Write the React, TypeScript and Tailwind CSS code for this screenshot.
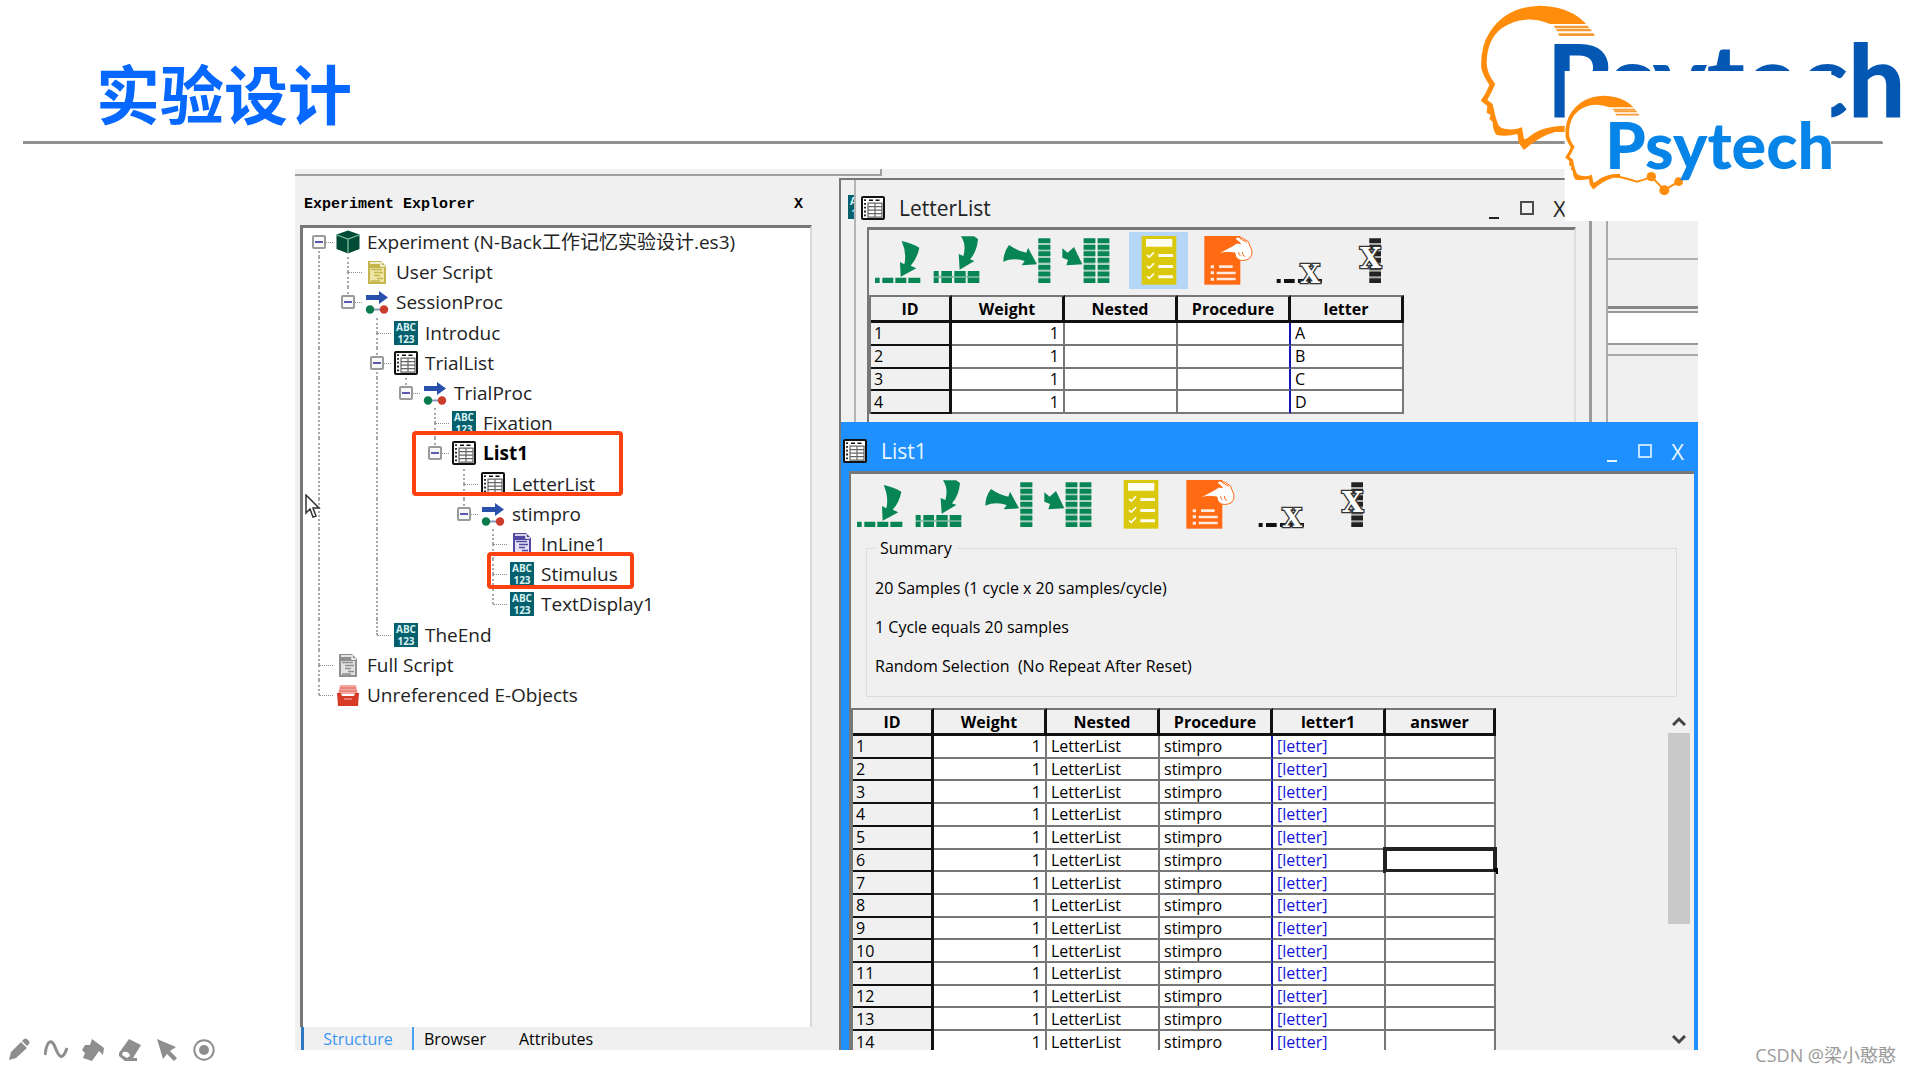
import type { ReactNode } from "react"

type IconName = "cube" | "userScript" | "proc" | "abc" | "list" | "inline" | "fullScript" | "box"

type TreeItem = {
  label: string
  icon: IconName
  depth: number
  open?: boolean
  bold?: boolean
}

const tree: TreeItem[] = [
  { label: "Experiment (N-Back工作记忆实验设计.es3)", icon: "cube", depth: 0, open: true },
  { label: "User Script", icon: "userScript", depth: 1 },
  { label: "SessionProc", icon: "proc", depth: 1, open: true },
  { label: "Introduc", icon: "abc", depth: 2 },
  { label: "TrialList", icon: "list", depth: 2, open: true },
  { label: "TrialProc", icon: "proc", depth: 3, open: true },
  { label: "Fixation", icon: "abc", depth: 4 },
  { label: "List1", icon: "list", depth: 4, open: true, bold: true },
  { label: "LetterList", icon: "list", depth: 5 },
  { label: "stimpro", icon: "proc", depth: 5, open: true },
  { label: "InLine1", icon: "inline", depth: 6 },
  { label: "Stimulus", icon: "abc", depth: 6 },
  { label: "TextDisplay1", icon: "abc", depth: 6 },
  { label: "TheEnd", icon: "abc", depth: 2 },
  { label: "Full Script", icon: "fullScript", depth: 0 },
  { label: "Unreferenced E-Objects", icon: "box", depth: 0 },
]

// true when another item of this depth follows before the branch closes
function continues(index: number, depth: number) {
  for (let i = index + 1; i < tree.length; i++) {
    if (tree[i].depth < depth) return false
    if (tree[i].depth === depth) return true
  }
  return false
}

function ListIcon() {
  return (
    <svg viewBox="0 0 24 24" className="h-6 w-6 shrink-0" aria-hidden="true">
      <rect x="1" y="1" width="22" height="22" rx="1" fill="#fff" stroke="#111" strokeWidth="2" />
      <path d="M8 4.2h4M14.5 4.2h4" stroke="#111" strokeWidth="1.6" />
      <path d="M4 3.2v18" stroke="#111" strokeWidth="1.8" strokeDasharray="1.8 2" />
      <path d="M7 7.2h14v14H7zM7 10.7h14M7 14.2h14M7 17.7h14M14 7.2v14" fill="none" stroke="#666" strokeWidth="1.2" />
    </svg>
  )
}

function AbcIcon() {
  return (
    <svg viewBox="0 0 24 24" className="h-6 w-6 shrink-0" aria-hidden="true">
      <rect width="24" height="24" fill="#05606e" />
      <g fill="#d9f2f2" fontFamily="'Open Sans', sans-serif" fontWeight="700" fontSize="10" textAnchor="middle">
        <text x="12" y="10.4">ABC</text>
        <text x="12" y="21.6">123</text>
      </g>
    </svg>
  )
}

function ScriptIcon({ line, fill }: { line: string; fill: string }) {
  return (
    <svg viewBox="0 0 24 24" className="h-6 w-6 shrink-0" aria-hidden="true">
      <path d="M3 1h13l5 5v18H3z" fill={line} />
      <path d="M5 3h10M16 2v4h4" stroke="#fff" strokeWidth="1.4" fill="none" />
      <rect x="5" y="8" width="14" height="14" fill={fill} />
      <path d="M6 9.5h11M9 12.5h9M9 15.5h6M12 18.5h6M6 21h9" stroke={line} strokeWidth="1.6" />
    </svg>
  )
}

function TreeIcon({ name }: { name: IconName }) {
  if (name === "list") return <ListIcon />
  if (name === "abc") return <AbcIcon />
  if (name === "userScript") return <ScriptIcon line="#c4b64c" fill="#eee6a6" />
  if (name === "inline") return <ScriptIcon line="#5248a0" fill="#e4e2f4" />
  if (name === "fullScript") return <ScriptIcon line="#8f8f8f" fill="#e2e2e2" />
  if (name === "proc")
    return (
      <svg viewBox="0 0 24 24" className="h-6 w-6 shrink-0" aria-hidden="true">
        <path d="M1 5h13V1l9 6.5-9 6.5v-4H1z" fill="#2a50ae" />
        <path d="M5 19.5h14" stroke="#8a9ab8" strokeWidth="2" />
        <circle cx="5" cy="19.5" r="4.2" fill="#0b7a4c" />
        <circle cx="19" cy="19.5" r="4.2" fill="#cc3c2c" />
      </svg>
    )
  if (name === "box")
    return (
      <svg viewBox="0 0 24 24" className="h-6 w-6 shrink-0" aria-hidden="true">
        <path d="M4 2h16l2 9H2z" fill="#f3a79e" />
        <path d="M4 5h16M3 8h18" stroke="#e26a5c" strokeWidth="1.2" />
        <path d="M1 10h4l1 3h12l1-3h4l-1 13H2z" fill="#d83a28" />
        <path d="M8 16h8" stroke="#f09488" strokeWidth="1.4" />
      </svg>
    )
  return (
    <svg viewBox="0 0 24 24" className="h-6 w-6 shrink-0" aria-hidden="true">
      <path d="M12 0.5 23.5 4.5v14.5L12 23.5 0.5 19V4.5z" fill="#004b35" />
      <path d="M1 5l11 4 11-4M12 9v14" stroke="#7fc0a4" strokeWidth="1.3" fill="none" />
    </svg>
  )
}

function TreeRow({ item, index }: { item: TreeItem; index: number }) {
  return (
    <li className="flex items-center whitespace-nowrap">
      {Array.from({ length: item.depth }, (_, d) => (
        <span key={d} className="flex h-full w-[29px] justify-center">
          {continues(index, d) && <span className="h-full border-l-2 border-dotted border-[#a8a8a8]" />}
        </span>
      ))}
      <span className="relative h-full w-[29px]">
        {index > 0 && <span className="absolute top-0 left-[14px] h-1/2 border-l-2 border-dotted border-[#a8a8a8]" />}
        {continues(index, item.depth) && (
          <span className="absolute bottom-0 left-[14px] h-1/2 border-l-2 border-dotted border-[#a8a8a8]" />
        )}
        <span className="absolute top-1/2 right-0 left-[15px] border-t border-dotted border-[#909090]" />
        {item.open && (
          <button
            aria-label={`Collapse ${item.label}`}
            className="absolute inset-0 m-auto flex h-[14px] w-[14px] items-center justify-center rounded-xs border-2 border-[#9a9a9a] bg-[#f8f8f8]"
          >
            <span className="h-[2px] w-[8px] bg-[#5a5ab0]" />
          </button>
        )}
      </span>
      <span className="flex w-[29px] justify-center">
        <TreeIcon name={item.icon} />
      </span>
      <span className={item.bold ? "pl-[5px] font-bold text-black" : "pl-[5px] text-[#222]"}>{item.label}</span>
    </li>
  )
}

const bars = [40, 60, 79, 99, 120, 140, 160]

function ToolButton({
  label,
  viewBox,
  active,
  children,
}: {
  label: string
  viewBox: string
  active?: boolean
  children: ReactNode
}) {
  return (
    <button aria-label={label} className={active ? "bg-[#b5d6f7]" : ""}>
      <svg viewBox={viewBox} className="h-[57px] w-[59px]" aria-hidden="true">
        {children}
      </svg>
    </button>
  )
}

function CrossMark({ x, y, size }: { x: number; y: number; size: number }) {
  return (
    <text
      x={x}
      y={y}
      fontFamily="'DejaVu Serif', serif"
      fontWeight="700"
      fontSize={size}
      textAnchor="middle"
      fill="#fff"
      stroke="#333"
      strokeWidth="8"
      style={{ paintOrder: "stroke" }}
    >
      X
    </text>
  )
}

function Toolbar({ active }: { active?: boolean }) {
  return (
    <div className="flex gap-3 pt-[2px]">
      <div className="flex">
        <ToolButton label="Add level" viewBox="12 21 177 171">
          <g fill="#078555">
            <path d="M110 48Q140 54 163 68Q157 100 137 122L154 130L107 155L105 111L118 118Q126 85 110 48z" />
            <path d="M30 158h14v16H30zM52 158h33v16H52zM91 158h33v16H91zM130 158h36v16h-36z" />
          </g>
        </ToolButton>
        <ToolButton label="Add multiple levels" viewBox="189 21 177 171">
          <g fill="#078555">
            <path d="M288 34L327 34L339 42Q336 80 315 103L328 108L284 134L281 87L295 93Q305 60 288 34z" />
            {[138, 158].map((y) => (
              <g key={y}>
                <rect x="206" y={y} width="15" height="16" />
                <rect x="229" y={y} width="32" height="16" />
                <rect x="268" y={y} width="34" height="16" />
                <rect x="308" y={y} width="35" height="16" />
              </g>
            ))}
            <path d="M206 152h137v7H206z" opacity="0.4" />
          </g>
        </ToolButton>
      </div>
      <div className="flex">
        <ToolButton label="Add attribute" viewBox="402 21 177 171">
          <g fill="#078555">
            <path d="M432 60Q458 78 484 83L489 68L516 118L470 121L479 108Q445 97 415 110Q415 82 432 60z" />
            <path d="M520 40h36v133h-36z" opacity="0.3" />
            {bars.map((y) => (
              <rect key={y} x="520" y={y} width="36" height="14" />
            ))}
          </g>
        </ToolButton>
        <ToolButton label="Add multiple attributes" viewBox="579 21 177 171">
          <g fill="#078555">
            <path d="M592 70L608 83L627 66L652 118L604 121L609 105L592 98z" />
            <path d="M656 40h35v133h-35zM698 40h35v133h-35z" opacity="0.3" />
            {bars.map((y) => (
              <g key={y}>
                <rect x="656" y={y} width="35" height="14" />
                <rect x="698" y={y} width="35" height="14" />
              </g>
            ))}
          </g>
        </ToolButton>
      </div>
      <ToolButton label="Summary" viewBox="29 21 177 171" active={active}>
        <rect x="67" y="33" width="104" height="146" fill="#d9c80c" />
        <path d="M80 42h79v23H80zM117 87h44v9h-44zM117 120h44v9h-44zM117 151h44v9h-44z" fill="#fffdf0" />
        <path
          d="M83 90l7 6 14-14M83 123l7 6 14-14M83 154l7 6 14-14"
          fill="none"
          stroke="#fffdf0"
          strokeWidth="5"
        />
      </ToolButton>
      <ToolButton label="Properties" viewBox="240 21 177 171">
        <rect x="253" y="33" width="108" height="146" fill="#ff6a13" />
        <path
          d="M294 86L342 60Q350 50 362 56Q352 46 345 42L352 36Q368 36 385 50L396 78Q398 92 388 101Q366 112 352 101Q344 94 345 84L320 82z"
          fill="#fff"
          stroke="#ff6a13"
          strokeWidth="3"
        />
        <path d="M362 92q-8-3-6-10M375 95q-9-4-8-14M360 40l20 12" fill="none" stroke="#ff6a13" strokeWidth="3" />
        <path d="M272 121h10v9h-10zM272 139h10v9h-10zM272 158h10v9h-10z" fill="#ffe9dc" />
        <path d="M297 121h41v8h-41zM290 140h57v8h-57zM290 158h57v8h-57z" fill="#ffe9dc" />
      </ToolButton>
      <ToolButton label="Delete level" viewBox="453 21 177 171">
        <path d="M470 162h12v12h-12zM492 162h32v12h-32zM534 162h72v12h-72z" fill="#111" />
        <CrossMark x={571} y={174} size={76} />
      </ToolButton>
      <ToolButton label="Delete attribute" viewBox="666 21 177 171">
        <path d="M748 40h35v133h-35z" fill="#111" opacity="0.3" />
        {bars.map((y) => (
          <rect key={y} x="748" y={y} width="35" height="14" fill="#222" />
        ))}
        <CrossMark x={752} y={128} size={82} />
      </ToolButton>
    </div>
  )
}

function TitleBar({ title }: { title: string }) {
  return (
    <div className="flex flex-1 items-center gap-[14px]">
      <ListIcon />
      <h2 className="flex-1 text-[21px] leading-6">{title}</h2>
      <div className="flex items-center text-[22px] leading-6">
        <button aria-label="Minimize" className="flex h-6 w-[33px] items-end justify-center pb-[1px]">
          <span className="h-[2px] w-[10px] bg-current" />
        </button>
        <button aria-label="Maximize" className="flex h-6 w-[33px] items-center justify-center">
          <span className="h-[14px] w-[14px] border-2 border-current opacity-80" />
        </button>
        <button aria-label="Close" className="w-[33px]">
          X
        </button>
      </div>
    </div>
  )
}

function HeadCell({ children, width }: { children: ReactNode; width: string }) {
  return (
    <th
      scope="col"
      className={`${width} h-[28px] border-t-2 border-r-3 border-b-3 border-t-[#777] border-r-[#111] border-b-[#111] bg-[#f0f0f0] p-0 font-bold`}
    >
      {children}
    </th>
  )
}

function IdCell({ children }: { children: ReactNode }) {
  return (
    <th
      scope="row"
      className="border-r-3 border-b-2 border-[#111] bg-[#f0f0f0] py-0 pl-[3px] text-left font-normal"
    >
      {children}
    </th>
  )
}

function LetterTable() {
  return (
    <table className="h-[119px] w-[535px] table-fixed border-separate border-spacing-0 border-l-2 border-[#777] text-[16px] leading-5 text-black">
      <thead>
        <tr>
          <HeadCell width="w-[81px]">ID</HeadCell>
          <HeadCell width="w-[113px]">Weight</HeadCell>
          <HeadCell width="w-[113px]">Nested</HeadCell>
          <HeadCell width="w-[113px]">Procedure</HeadCell>
          <HeadCell width="w-[113px]">letter</HeadCell>
        </tr>
      </thead>
      <tbody>
        {["A", "B", "C", "D"].map((letter, i) => (
          <tr key={letter}>
            <IdCell>{i + 1}</IdCell>
            <td className="border-r-2 border-b-2 border-[#777] bg-white py-0 pr-[4px] text-right">1</td>
            <td className="border-r-2 border-b-2 border-[#777] bg-white p-0"></td>
            <td className="border-r-2 border-b-2 border-[#777] border-r-[#1018b0] bg-white p-0"></td>
            <td className="border-r-2 border-b-2 border-[#777] bg-white py-0 pl-[4px]">{letter}</td>
          </tr>
        ))}
      </tbody>
    </table>
  )
}

function SampleTable() {
  return (
    <table className="h-[346px] w-[645px] table-fixed border-separate border-spacing-0 border-l-2 border-[#777] text-[16px] leading-5 text-black">
      <thead>
        <tr>
          <HeadCell width="w-[81px]">ID</HeadCell>
          <HeadCell width="w-[113px]">Weight</HeadCell>
          <HeadCell width="w-[113px]">Nested</HeadCell>
          <HeadCell width="w-[113px]">Procedure</HeadCell>
          <HeadCell width="w-[113px]">letter1</HeadCell>
          <HeadCell width="w-[110px]">answer</HeadCell>
        </tr>
      </thead>
      <tbody>
        {Array.from({ length: 14 }, (_, i) => (
          <tr key={i}>
            <IdCell>{i + 1}</IdCell>
            <td className="border-r-2 border-b-2 border-[#777] bg-white py-0 pr-[4px] text-right">1</td>
            <td className="border-r-2 border-b-2 border-[#777] bg-white py-0 pl-[4px]">LetterList</td>
            <td className="border-r-2 border-b-2 border-[#777] border-r-[#1018b0] bg-white py-0 pl-[4px]">stimpro</td>
            <td className="border-r-2 border-b-2 border-[#777] bg-white py-0 pl-[4px] text-[#1414d8]">[letter]</td>
            <td className="relative border-r-2 border-b-2 border-[#777] bg-white p-0">
              {i === 5 && (
                <span className="absolute -top-[3px] -right-[3px] -bottom-[3px] -left-[3px] border-4 border-[#222]">
                  <span className="absolute -right-[5px] -bottom-[5px] h-[6px] w-[4px] bg-black" />
                </span>
              )}
            </td>
          </tr>
        ))}
      </tbody>
    </table>
  )
}

function Head() {
  return (
    <g>
      <path
        d="M462 108Q420 20 300 17Q200 20 150 95Q120 140 124 205Q128 225 148 255Q140 278 122 302L142 318L140 338L152 345L148 356L158 366Q158 392 170 405Q200 410 232 402L236 428L252 450Q300 408 345 396L376 396V377Q300 378 262 415L252 418L246 382Q230 390 205 388Q178 386 174 372L166 348L158 312L142 300Q156 275 166 252Q142 225 140 190Q140 120 185 85Q250 40 330 72L440 72z"
        fill="#ff8c0a"
      />
      <path d="M325 72h150v45h-114z" fill="#fff" />
      <path d="M341 77h102l5 8H346zM348 87h103l5 7H352zM354 100h107l3 8H358z" fill="#f59a35" />
    </g>
  )
}

function Logo() {
  return (
    <svg viewBox="0 0 1410 663" className="absolute top-0 right-0 h-[221px] w-[470px]" role="img" aria-label="Psytech">
      <Head />
      <text
        x="320"
        y="350"
        fontFamily="Lato, sans-serif"
        fontWeight="900"
        fontSize="304"
        fill="#0458b4"
      >
        Psytech
      </text>
      <path d="M374 213h800v250h-800z" fill="#fff" />
      <path d="M374 440h400v223h-400z" fill="#fff" />
      <path d="M1174 425h155v6h-155z" fill="#909090" />
      <g transform="translate(296 276) scale(0.65)">
        <Head />
      </g>
      <path d="M520 528Q560 534 590 545Q615 540 634 530L673 570L716 545" fill="none" stroke="#ff8c0a" strokeWidth="6" />
      <circle cx="634" cy="530" r="14" fill="#ff8c0a" />
      <circle cx="673" cy="571" r="15" fill="#ff8c0a" />
      <circle cx="716" cy="545" r="13" fill="#ff8c0a" />
      <text
        x="496"
        y="507"
        fontFamily="Lato, sans-serif"
        fontWeight="900"
        fontSize="194"
        fill="#0784e8"
      >
        Psytech
      </text>
    </svg>
  )
}

function PenTools() {
  return (
    <div className="flex items-end pb-[11px] text-[#8e8e8e]">
      <button aria-label="Pen" className="flex w-[37px] justify-center">
        <svg viewBox="0 0 24 24" className="h-6 w-6" fill="currentColor">
          <path d="M2 22l2-8L14 4l6 6L9 20zM15 3l2-2q1-1 3 0l2 2q1 2 0 3l-2 2z" />
        </svg>
      </button>
      <button aria-label="Curve" className="flex w-[37px] justify-center">
        <svg viewBox="0 0 24 24" className="h-6 w-6" fill="none" stroke="currentColor" strokeWidth="3">
          <path d="M1 17C3 1 8 1 11 9S18 25 23 10" />
        </svg>
      </button>
      <button aria-label="Fill" className="flex w-[37px] justify-center">
        <svg viewBox="0 0 24 24" className="h-6 w-6" fill="currentColor">
          <path d="M11 1l12 9-1 7-4-4-7 10-9-3 2-5-3-3 3-5 5 0z" />
        </svg>
      </button>
      <button aria-label="Eraser" className="flex w-[37px] justify-center">
        <svg viewBox="0 0 24 24" className="h-6 w-6" fill="currentColor">
          <path fillRule="evenodd" d="M11 1l12 6-8 13h4v3H7l-6-5v-3zM5 14l-1 3 5 3 3-2q-1-5-7-4z" />
        </svg>
      </button>
      <button aria-label="Pointer" className="flex w-[37px] justify-center">
        <svg viewBox="0 0 24 24" className="h-6 w-6" fill="currentColor">
          <path d="M2 1l19 8-6 4 7 7-3 3-7-7-4 5z" />
        </svg>
      </button>
      <button aria-label="Record" className="flex w-[37px] justify-center">
        <svg viewBox="0 0 24 24" className="h-6 w-6" fill="currentColor">
          <circle cx="12" cy="12" r="9.7" fill="none" stroke="currentColor" strokeWidth="2" />
          <circle cx="12" cy="12" r="5" />
        </svg>
      </button>
    </div>
  )
}

function Explorer() {
  return (
    <section className="relative flex w-[544px] shrink-0 flex-col bg-[#f0f0f0]">
      <div className="absolute top-0 left-0 z-10 h-[7px] w-[587px] border-r-2 border-b-2 border-[#a0a0a0]" />
      <div className="flex h-[56px] items-center justify-between pt-4 pr-[36px] pl-[9px] font-['Liberation_Mono',monospace] text-[15px] leading-5 font-bold text-black">
        <h2>Experiment Explorer</h2>
        <button aria-label="Close explorer">X</button>
      </div>
      <div className="relative mr-[27px] ml-[5px] flex-1 border-t-3 border-r-2 border-l-3 border-t-[#777] border-r-[#d8d8d8] border-l-[#777] bg-white">
        <ul className="-mt-px grid h-[483px] auto-rows-fr pl-px text-[19px] leading-6">
          {tree.map((item, i) => (
            <TreeRow key={item.label} item={item} index={i} />
          ))}
        </ul>
        {/* highlighted nodes */}
        <div className="absolute top-[203px] left-[109px] h-[65px] w-[211px] rounded border-4 border-[#ff4010]" />
        <div className="absolute top-[324px] left-[184px] h-[37px] w-[147px] rounded border-4 border-[#ff4010]" />
        <svg viewBox="0 0 16 24" className="absolute top-[266px] left-[2px] h-6 w-4" aria-hidden="true">
          <path d="M1 1v18l4-4 3 8 3-1-3-8h6z" fill="#fff" stroke="#333" strokeWidth="1.5" />
        </svg>
      </div>
      <div className="ml-[6px] flex h-[23px] items-stretch border-l-3 border-[#2f78c0] text-[16px] leading-6 text-black">
        <button className="w-[110px] border-r-2 border-[#4aa0f0] text-[#3c96f4]">Structure</button>
        <button className="w-[82px]">Browser</button>
        <button className="ml-2 w-[104px]">Attributes</button>
      </div>
    </section>
  )
}

function LetterListWindow() {
  return (
    <div className="flex flex-1 flex-col border-r-3 border-l-2 border-r-[#999] border-l-[#b5b5b5]">
      <div className="flex h-[47px] pt-2 pr-[13px] pl-[5px] text-[#222]">
        <TitleBar title="LetterList" />
      </div>
      <div className="mr-[13px] ml-[11px] flex-1 border-t-3 border-r-2 border-l-2 border-t-[#777] border-r-[#ddd] border-l-[#777]">
        <div className="h-[65px]">
          <Toolbar active />
        </div>
        <LetterTable />
      </div>
    </div>
  )
}

function ListWindow() {
  return (
    <div className="flex min-h-0 flex-1 flex-col bg-[#1e90ff] pr-[4px]">
      <div className="flex h-[49px] pt-[9px] pl-[2px] text-[#e8f6ff]">
        <TitleBar title="List1" />
      </div>
      <div className="ml-[8px] flex min-h-0 flex-1 flex-col border-t-3 border-l-2 border-[#777] bg-[#f0f0f0]">
        <Toolbar />
        <fieldset className="mt-[4px] mr-[17px] ml-[15px] border border-[#dcdcdc] pt-[10px] pb-[10px] pl-2 text-[16px] leading-[39px] text-black">
          <legend className="px-[5px] leading-[22px]">Summary</legend>
          <p>20 Samples (1 cycle x 20 samples/cycle)</p>
          <p>1 Cycle equals 20 samples</p>
          <p className="whitespace-pre">Random Selection  (No Repeat After Reset)</p>
        </fieldset>
        <div className="mt-[11px] flex min-h-0 flex-1 justify-between overflow-hidden">
          <SampleTable />
          <div className="mr-[3px] flex w-6 flex-col items-center text-[#444]">
            <button aria-label="Scroll up" className="flex h-[25px] items-center">
              <svg viewBox="0 0 14 10" className="h-[10px] w-[14px]" fill="none" stroke="currentColor" strokeWidth="3">
                <path d="M1 9l6-6 6 6" />
              </svg>
            </button>
            <div className="h-[191px] w-[22px] bg-[#c9c9c9]" />
            <button aria-label="Scroll down" className="mt-auto flex h-[20px] items-center">
              <svg viewBox="0 0 14 10" className="h-[10px] w-[14px]" fill="none" stroke="currentColor" strokeWidth="3">
                <path d="M1 1l6 6 6-6" />
              </svg>
            </button>
          </div>
        </div>
      </div>
    </div>
  )
}

function Workspace() {
  return (
    <section className="flex min-w-0 flex-1 flex-col bg-[#f0f0f0] pt-[9px]">
      <div className="flex min-h-0 flex-1 flex-col border-t-2 border-l-2 border-[#777]">
        <div className="flex h-[242px]">
          <div className="w-[13px] overflow-hidden pt-[15px] pl-[7px]">
            <AbcIcon />
          </div>
          <LetterListWindow />
          {/* edge of the panel behind the windows */}
          <div className="ml-[14px] flex w-[92px] flex-col border-l-2 border-[#aaa]">
            <div className="h-[80px] border-b-2 border-[#b0b0b0]" />
            <div className="h-[49px] border-b-3 border-[#888]" />
            <div className="mt-[2px] h-[34px] border-y-2 border-[#999] bg-white" />
            <div className="mt-[9px] border-t-2 border-[#aaa]" />
          </div>
        </div>
        <ListWindow />
      </div>
    </section>
  )
}

export default function App() {
  return (
    <div className="relative flex h-screen flex-col overflow-hidden bg-white font-['Open_Sans','Noto_Sans_CJK_SC',sans-serif]">
      <header className="h-[169px] shrink-0 pt-[53px] pr-[28px] pl-[23px]">
        <h1 className="h-[88px] pl-[73px] font-['Noto_Sans_CJK_SC',sans-serif] text-[64px] leading-[76px] font-bold text-[#0668ff]">
          实验设计
        </h1>
        <hr className="border-t-3 border-[#909090]" />
      </header>
      <main className="flex min-h-0 flex-1">
        <div className="flex w-[295px] shrink-0 items-end">
          <PenTools />
        </div>
        <div className="mb-[23px] flex min-w-0 flex-1">
          <Explorer />
          <Workspace />
        </div>
        <div className="flex w-[212px] shrink-0 items-end justify-end pr-[14px] pb-[6px] text-[18px] leading-6 whitespace-nowrap text-[#9a9a9a]">
          CSDN @梁小憨憨
        </div>
      </main>
      <Logo />
    </div>
  )
}
